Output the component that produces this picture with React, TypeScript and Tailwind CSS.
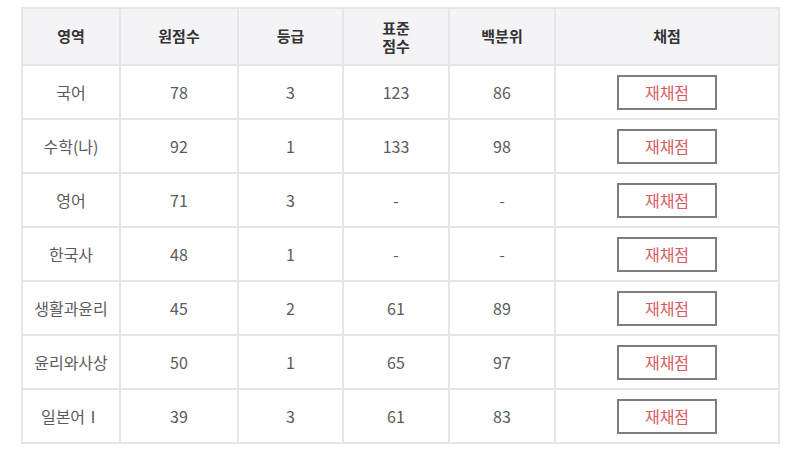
import React from "react";

const rows = [
  { area: "국어", raw: "78", grade: "3", std: "123", pct: "86" },
  { area: "수학(나)", raw: "92", grade: "1", std: "133", pct: "98" },
  { area: "영어", raw: "71", grade: "3", std: "-", pct: "-" },
  { area: "한국사", raw: "48", grade: "1", std: "-", pct: "-" },
  { area: "생활과윤리", raw: "45", grade: "2", std: "61", pct: "89" },
  { area: "윤리와사상", raw: "50", grade: "1", std: "65", pct: "97" },
  { area: "일본어Ⅰ", raw: "39", grade: "3", std: "61", pct: "83" },
];

export default function App() {
  const th = "border-2 border-[#e6e6e8] font-bold text-[15px] text-[#333] align-middle";
  const td = "border-2 border-[#e6e6e8] text-[16px] text-[#5a5a5a] text-center align-middle";
  return (
    <div
      className="w-[800px] h-[466px] bg-white pt-[7px] pl-[21px]"
      style={{ fontFamily: '"Noto Sans CJK KR", "Noto Sans", sans-serif' }}
    >
      <table className="border-collapse w-[757px] table-fixed">
        <colgroup>
          <col className="w-[98px]" />
          <col className="w-[118px]" />
          <col className="w-[105px]" />
          <col className="w-[106px]" />
          <col className="w-[106px]" />
          <col className="w-[224px]" />
        </colgroup>
        <thead>
          <tr className="h-[57px] bg-[#f4f4f6]">
            <th className={th}>영역</th>
            <th className={th}>원점수</th>
            <th className={th}>등급</th>
            <th className={`${th} leading-[18px]`}>
              표준
              <br />
              점수
            </th>
            <th className={th}>백분위</th>
            <th className={th}>채점</th>
          </tr>
        </thead>
        <tbody>
          {rows.map((r) => (
            <tr key={r.area} className="h-[54px]">
              <td className={td}>{r.area}</td>
              <td className={td}>{r.raw}</td>
              <td className={td}>{r.grade}</td>
              <td className={td}>{r.std}</td>
              <td className={td}>{r.pct}</td>
              <td className={td}>
                <button className="w-[100px] h-[35px] border-2 border-[#7d7d7d] bg-white text-[#da5a5f] text-[16px]">
                  재채점
                </button>
              </td>
            </tr>
          ))}
        </tbody>
      </table>
    </div>
  );
}
